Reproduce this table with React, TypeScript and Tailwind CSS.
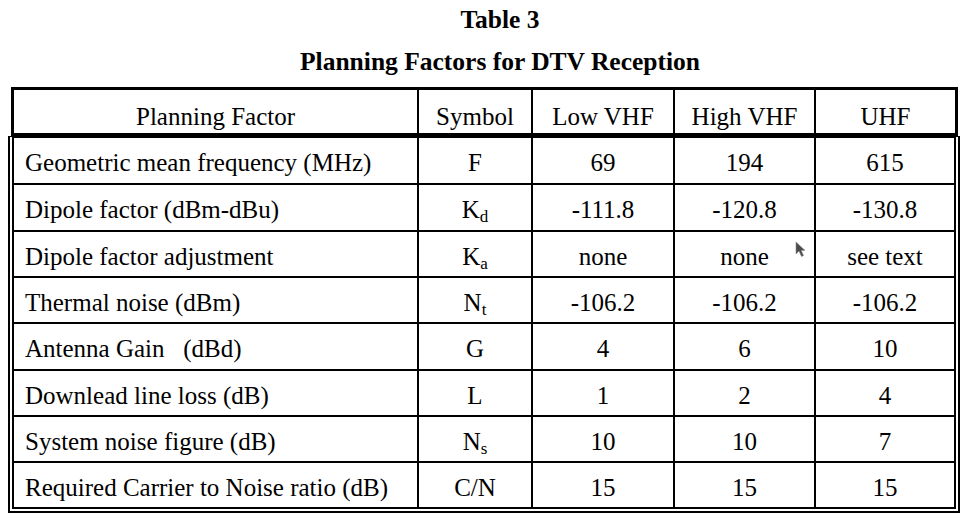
import React from "react";

type Row = {
  label: string;
  sym: React.ReactNode;
  v: [string, string, string];
  h: string;
  last?: boolean;
};

const rows: Row[] = [
  { label: "Geometric mean frequency (MHz)", sym: "F", v: ["69", "194", "615"], h: "h-[47px]" },
  { label: "Dipole factor (dBm-dBu)", sym: <>K<sub className="text-[17px]">d</sub></>, v: ["-111.8", "-120.8", "-130.8"], h: "h-[47px]" },
  { label: "Dipole factor adjustment", sym: <>K<sub className="text-[17px]">a</sub></>, v: ["none", "none", "see text"], h: "h-[46px]" },
  { label: "Thermal noise (dBm)", sym: <>N<sub className="text-[17px]">t</sub></>, v: ["-106.2", "-106.2", "-106.2"], h: "h-[46px]" },
  { label: "Antenna Gain \u00a0\u00a0(dBd)", sym: "G", v: ["4", "6", "10"], h: "h-[47px]" },
  { label: "Downlead line loss (dB)", sym: "L", v: ["1", "2", "4"], h: "h-[46px]" },
  { label: "System noise figure (dB)", sym: <>N<sub className="text-[17px]">s</sub></>, v: ["10", "10", "7"], h: "h-[46px]" },
  { label: "Required Carrier to Noise ratio (dB)", sym: "C/N", v: ["15", "15", "15"], h: "h-[44px]", last: true },
];

export default function App() {
  return (
    <div className="relative w-[970px] h-[522px] bg-white text-black font-['Liberation_Serif','Times_New_Roman',serif] overflow-hidden">
      <div className="pl-[30px]">
        <div className="pt-[6px] text-center font-bold text-[25.5px] leading-[28px]">Table 3</div>
        <div className="mt-[14px] text-center font-bold text-[25.5px] leading-[28px]">
          Planning Factors for DTV Reception
        </div>
      </div>

      <div className="mt-[11px] ml-[8px] w-[952px]">
        {/* header */}
        <div className="ml-[3px] w-[947px] border-[3px] border-black flex h-[49px] text-[25px] leading-[28px]">
          <div className="w-[403px] pt-[13px] text-center">Planning Factor</div>
          <div className="w-[114px] border-l-2 border-black pt-[13px] text-center">Symbol</div>
          <div className="w-[142px] border-l-2 border-black pt-[13px] text-center">Low VHF</div>
          <div className="w-[141px] border-l-2 border-black pt-[13px] text-center">High VHF</div>
          <div className="w-[141px] border-l-2 border-black pt-[13px] text-center">UHF</div>
        </div>

        {/* body */}
        <div className="border-[6px] border-double border-t-2 border-t-black border-black text-[25px] leading-[28px]">
          {rows.map((r, i) => (
            <div
              key={i}
              className={`flex ${r.h} ${r.last ? "" : "border-b-2 border-black"}`}
            >
              <div className="w-[403px] pl-[11px] pt-[11px] whitespace-nowrap">{r.label}</div>
              <div className="w-[114px] border-l-2 border-black pt-[11px] text-center">{r.sym}</div>
              <div className="w-[142px] border-l-2 border-black pt-[11px] text-center">{r.v[0]}</div>
              <div className="w-[141px] border-l-2 border-black pt-[11px] text-center">{r.v[1]}</div>
              <div className="w-[140px] border-l-2 border-black pt-[11px] text-center">{r.v[2]}</div>
            </div>
          ))}
        </div>
      </div>

      {/* mouse cursor */}
      <svg
        className="absolute left-[795px] top-[241px]"
        width="12"
        height="17"
        viewBox="0 0 12 17"
      >
        <path d="M1 1 L1 13 L4 10 L6.5 15.5 L8.5 14.6 L6.2 9.4 L10 9.4 Z" fill="#4b4b4b" stroke="#8a8a8a" strokeWidth="0.6" />
      </svg>
    </div>
  );
}
